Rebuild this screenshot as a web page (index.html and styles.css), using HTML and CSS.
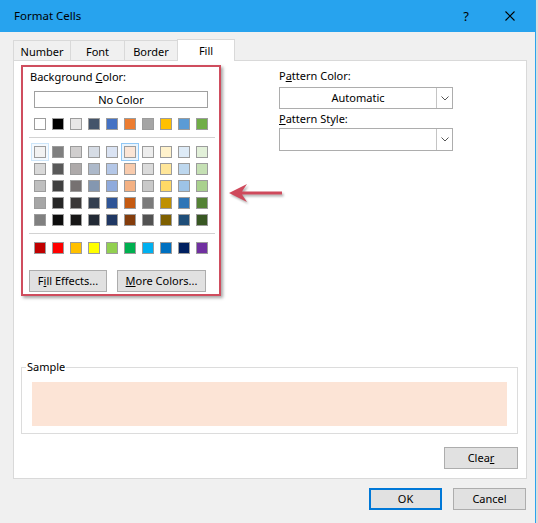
FILE: index.html
```html
<!DOCTYPE html>
<html>
<head>
<meta charset="utf-8">
<title>Format Cells</title>
<link rel="stylesheet" href="styles.css">
</head>
<body>
<div class="window">
  <div class="titlebar">
    <span class="title">Format Cells</span>
    <span class="help">?</span>
    <svg class="close" width="10" height="10" viewBox="0 0 10 10"><path d="M0.5 0.5 L9.5 9.5 M9.5 0.5 L0.5 9.5" stroke="#000" stroke-width="1.1" fill="none"/></svg>
  </div>
  <div class="content">
    <div class="tabs">
      <div class="tab tab-number">Number</div>
      <div class="tab tab-font">Font</div>
      <div class="tab tab-border">Border</div>
      <div class="tab tab-fill active">Fill</div>
    </div>
    <div class="panel">
      <div class="top">
        <div class="bg-box">
          <div class="label">Background <u>C</u>olor:</div>
          <div class="nocolor">No Color</div>
          <div class="swrow">
            <span class="sw" style="background:#FFFFFF"></span>
            <span class="sw" style="background:#000000"></span>
            <span class="sw" style="background:#E7E6E6"></span>
            <span class="sw" style="background:#44546A"></span>
            <span class="sw" style="background:#4472C4"></span>
            <span class="sw" style="background:#ED7D31"></span>
            <span class="sw" style="background:#A5A5A5"></span>
            <span class="sw" style="background:#FFC000"></span>
            <span class="sw" style="background:#5B9BD5"></span>
            <span class="sw" style="background:#70AD47"></span>
          </div>
          <div class="sep"></div>
          <div class="grid">
            <span class="sw hover" style="background:#F2F2F2"></span>
            <span class="sw" style="background:#7F7F7F"></span>
            <span class="sw" style="background:#D0CECE"></span>
            <span class="sw" style="background:#D6DCE5"></span>
            <span class="sw" style="background:#DAE3F3"></span>
            <span class="sw selected" style="background:#FBE5D6"></span>
            <span class="sw" style="background:#EDEDED"></span>
            <span class="sw" style="background:#FFF2CC"></span>
            <span class="sw" style="background:#DEEBF7"></span>
            <span class="sw" style="background:#E2F0D9"></span>

            <span class="sw" style="background:#D9D9D9"></span>
            <span class="sw" style="background:#595959"></span>
            <span class="sw" style="background:#AEAAAA"></span>
            <span class="sw" style="background:#ADB9CA"></span>
            <span class="sw" style="background:#B4C7E7"></span>
            <span class="sw" style="background:#F8CBAD"></span>
            <span class="sw" style="background:#DBDBDB"></span>
            <span class="sw" style="background:#FFE699"></span>
            <span class="sw" style="background:#BDD7EE"></span>
            <span class="sw" style="background:#C5E0B4"></span>

            <span class="sw" style="background:#BFBFBF"></span>
            <span class="sw" style="background:#404040"></span>
            <span class="sw" style="background:#767171"></span>
            <span class="sw" style="background:#8497B0"></span>
            <span class="sw" style="background:#8FAADC"></span>
            <span class="sw" style="background:#F4B183"></span>
            <span class="sw" style="background:#C9C9C9"></span>
            <span class="sw" style="background:#FFD966"></span>
            <span class="sw" style="background:#9DC3E6"></span>
            <span class="sw" style="background:#A9D18E"></span>

            <span class="sw" style="background:#A6A6A6"></span>
            <span class="sw" style="background:#262626"></span>
            <span class="sw" style="background:#3A3838"></span>
            <span class="sw" style="background:#333F50"></span>
            <span class="sw" style="background:#2F5597"></span>
            <span class="sw" style="background:#C55A11"></span>
            <span class="sw" style="background:#7B7B7B"></span>
            <span class="sw" style="background:#BF9000"></span>
            <span class="sw" style="background:#2E75B6"></span>
            <span class="sw" style="background:#548235"></span>

            <span class="sw" style="background:#808080"></span>
            <span class="sw" style="background:#0D0D0D"></span>
            <span class="sw" style="background:#171616"></span>
            <span class="sw" style="background:#222A35"></span>
            <span class="sw" style="background:#203864"></span>
            <span class="sw" style="background:#843C0C"></span>
            <span class="sw" style="background:#525252"></span>
            <span class="sw" style="background:#7F6000"></span>
            <span class="sw" style="background:#1F4E79"></span>
            <span class="sw" style="background:#385723"></span>
          </div>
          <div class="sep sep2"></div>
          <div class="swrow std">
            <span class="sw" style="background:#C00000"></span>
            <span class="sw" style="background:#FF0000"></span>
            <span class="sw" style="background:#FFC000"></span>
            <span class="sw" style="background:#FFFF00"></span>
            <span class="sw" style="background:#92D050"></span>
            <span class="sw" style="background:#00B050"></span>
            <span class="sw" style="background:#00B0F0"></span>
            <span class="sw" style="background:#0070C0"></span>
            <span class="sw" style="background:#002060"></span>
            <span class="sw" style="background:#7030A0"></span>
          </div>
          <div class="btnrow">
            <div class="btn btn-fill">F<u>i</u>ll Effects...</div>
            <div class="btn btn-more"><u>M</u>ore Colors...</div>
          </div>
        </div>
        <div class="pattern">
          <div class="plabel">P<u>a</u>ttern Color:</div>
          <div class="dropdown">
            <span class="dd-text">Automatic</span>
            <span class="dd-arrow"><svg width="8" height="5" viewBox="0 0 8 5"><path d="M0.5 0.5 L4 4 L7.5 0.5" stroke="#555" stroke-width="1" fill="none"/></svg></span>
          </div>
          <div class="plabel plabel2"><u>P</u>attern Style:</div>
          <div class="dropdown dropdown2">
            <span class="dd-text"></span>
            <span class="dd-arrow"><svg width="8" height="5" viewBox="0 0 8 5"><path d="M0.5 0.5 L4 4 L7.5 0.5" stroke="#555" stroke-width="1" fill="none"/></svg></span>
          </div>
        </div>
      </div>
      <fieldset class="sample">
        <legend>Sample</legend>
        <div class="sample-fill"></div>
      </fieldset>
      <div class="clear-row">
        <div class="btn btn-clear">Clea<u>r</u></div>
      </div>
    </div>
    <div class="footer">
      <div class="btn btn-ok">OK</div>
      <div class="btn btn-cancel">Cancel</div>
    </div>
  </div>
  <svg class="arrow" width="64" height="30" viewBox="0 0 64 30">
    <defs>
      <filter id="blur" x="-20%" y="-50%" width="140%" height="200%"><feGaussianBlur stdDeviation="1"/></filter>
    </defs>
    <path d="M5 13 L23 4 L18 11.5 L58 11.5 L58 14.5 L18 14.5 L23 22 Z" fill="rgba(0,0,0,0.3)" transform="translate(1.5,2)" filter="url(#blur)"/>
    <path d="M5 13 L23 4 L18 11.5 L58 11.5 L58 14.5 L18 14.5 L23 22 Z" fill="#cf4a5c"/>
  </svg>
</div>
</body>
</html>
```

FILE: styles.css
```css
html, body {
  margin: 0;
  padding: 0;
}
body {
  background: #dcdcdc;
  font-family: "Noto Sans", "Open Sans", sans-serif;
  font-size: 11px;
  color: #000;
}
.window {
  position: relative;
  width: 535px;
  height: 523px;
  background: #f0f0f0;
  border-right: 1px solid #2aa4ee;
}
.titlebar {
  height: 32px;
  background: #27a3ee;
  display: flex;
  align-items: center;
  padding-left: 14px;
}
.title {
  flex: 1;
  font-size: 11.5px;
  line-height: 14px;
  margin-top: -1px;
}
.help {
  font-size: 13px;
  line-height: 14px;
  margin-right: 36px;
  margin-top: -1px;
}
.close {
  margin-right: 20px;
  display: block;
}
.content {
  padding: 7px 0 0 13px;
}
.tabs {
  display: flex;
  align-items: flex-start;
  height: 22px;
  margin-bottom: -1px;
  position: relative;
  z-index: 1;
}
.tab {
  box-sizing: border-box;
  height: 20px;
  margin-top: 1px;
  border: 1px solid #d9d9d9;
  border-bottom: none;
  background: #f0f0f0;
  text-align: center;
  line-height: 16px;
  padding-top: 3px;
}
.tab + .tab {
  margin-left: -1px;
}
.tab-number { width: 58px; }
.tab-font { width: 55px; }
.tab-border { width: 54px; }
.tab-fill { width: 58px; }
.tab.active {
  height: 22px;
  margin-top: 0;
  background: #fff;
  padding-top: 3px;
}
.panel {
  box-sizing: border-box;
  width: 514px;
  height: 419px;
  border: 1px solid #d9d9d9;
  background: #fff;
  padding: 4px 8px 0 7px;
}
.top {
  display: flex;
}
.bg-box {
  box-sizing: border-box;
  width: 200px;
  height: 231px;
  border: 2px solid #cf4d5e;
  box-shadow: 2px 2px 3px rgba(0, 0, 0, 0.35);
  padding: 3px 0 0 0;
}
.label {
  line-height: 14px;
  padding-left: 7px;
}
.nocolor {
  box-sizing: border-box;
  margin: 7px 0 0 11px;
  width: 174px;
  height: 17px;
  border: 1px solid #a0a0a0;
  text-align: center;
  line-height: 15px;
}
.swrow {
  display: flex;
  gap: 6px;
  margin: 10px 0 0 11px;
}
.sw {
  display: block;
  box-sizing: border-box;
  width: 12px;
  height: 12px;
  border: 1px solid #9c9c9c;
}
.sep {
  margin: 7px 0 0 6px;
  width: 186px;
  height: 1px;
  background: #d2d2d2;
}
.grid {
  display: grid;
  grid-template-columns: repeat(10, 12px);
  column-gap: 6px;
  row-gap: 5px;
  margin: 8px 0 0 11px;
}
.sw.hover {
  box-shadow: 0 0 0 2px #f4f9fe, 0 0 0 3px #cde6fa;
}
.sw.selected {
  box-shadow: 0 0 0 2px #eaf4fd, 0 0 0 3px #90c8f6;
}
.sep2 {
  margin-top: 7px;
}
.std {
  margin-top: 8px;
}
.btnrow {
  display: flex;
  gap: 10px;
  margin: 16px 0 0 6px;
}
.btn {
  box-sizing: border-box;
  height: 22px;
  border: 1px solid #adadad;
  background: #e1e1e1;
  text-align: center;
  line-height: 19px;
}
.btn-fill { width: 78px; }
.btn-more { width: 89px; }
.pattern {
  margin-left: 58px;
  padding-top: 4px;
}
.plabel {
  line-height: 14px;
}
.dropdown {
  box-sizing: border-box;
  display: flex;
  width: 174px;
  height: 22px;
  margin-top: 4px;
  border: 1px solid #adadad;
  background: #fff;
}
.dd-text {
  flex: 1;
  text-align: center;
  line-height: 20px;
}
.dd-arrow {
  box-sizing: border-box;
  width: 16px;
  height: 20px;
  border-left: 1px solid #c4c4c4;
  display: flex;
  align-items: center;
  justify-content: center;
}
.dd-arrow svg {
  display: block;
}
.plabel2 {
  margin-top: 3px;
}
.dropdown2 {
  margin-top: 2px;
  height: 23px;
}
.dropdown2 .dd-arrow {
  height: 21px;
}
.sample {
  margin: 64px 0 0 0;
  padding: 0 10px 7px 10px;
  border: 1px solid #dcdcdc;
  min-width: 0;
}
.sample legend {
  padding: 0 1px;
  margin-left: -6px;
  line-height: 14px;
}
.sample-fill {
  margin-top: 8px;
  height: 44px;
  background: #fce4d6;
}
.clear-row {
  display: flex;
  justify-content: flex-end;
  margin-top: 13px;
  padding-right: 0;
}
.btn-clear { width: 74px; }
.footer {
  display: flex;
  justify-content: flex-end;
  gap: 11px;
  margin-top: 9px;
  padding-right: 9px;
}
.btn-ok {
  width: 73px;
  border: 2px solid #0078d7;
  line-height: 18px;
}
.btn-cancel { width: 73px; }
.arrow {
  position: absolute;
  left: 224px;
  top: 180px;
}
```
